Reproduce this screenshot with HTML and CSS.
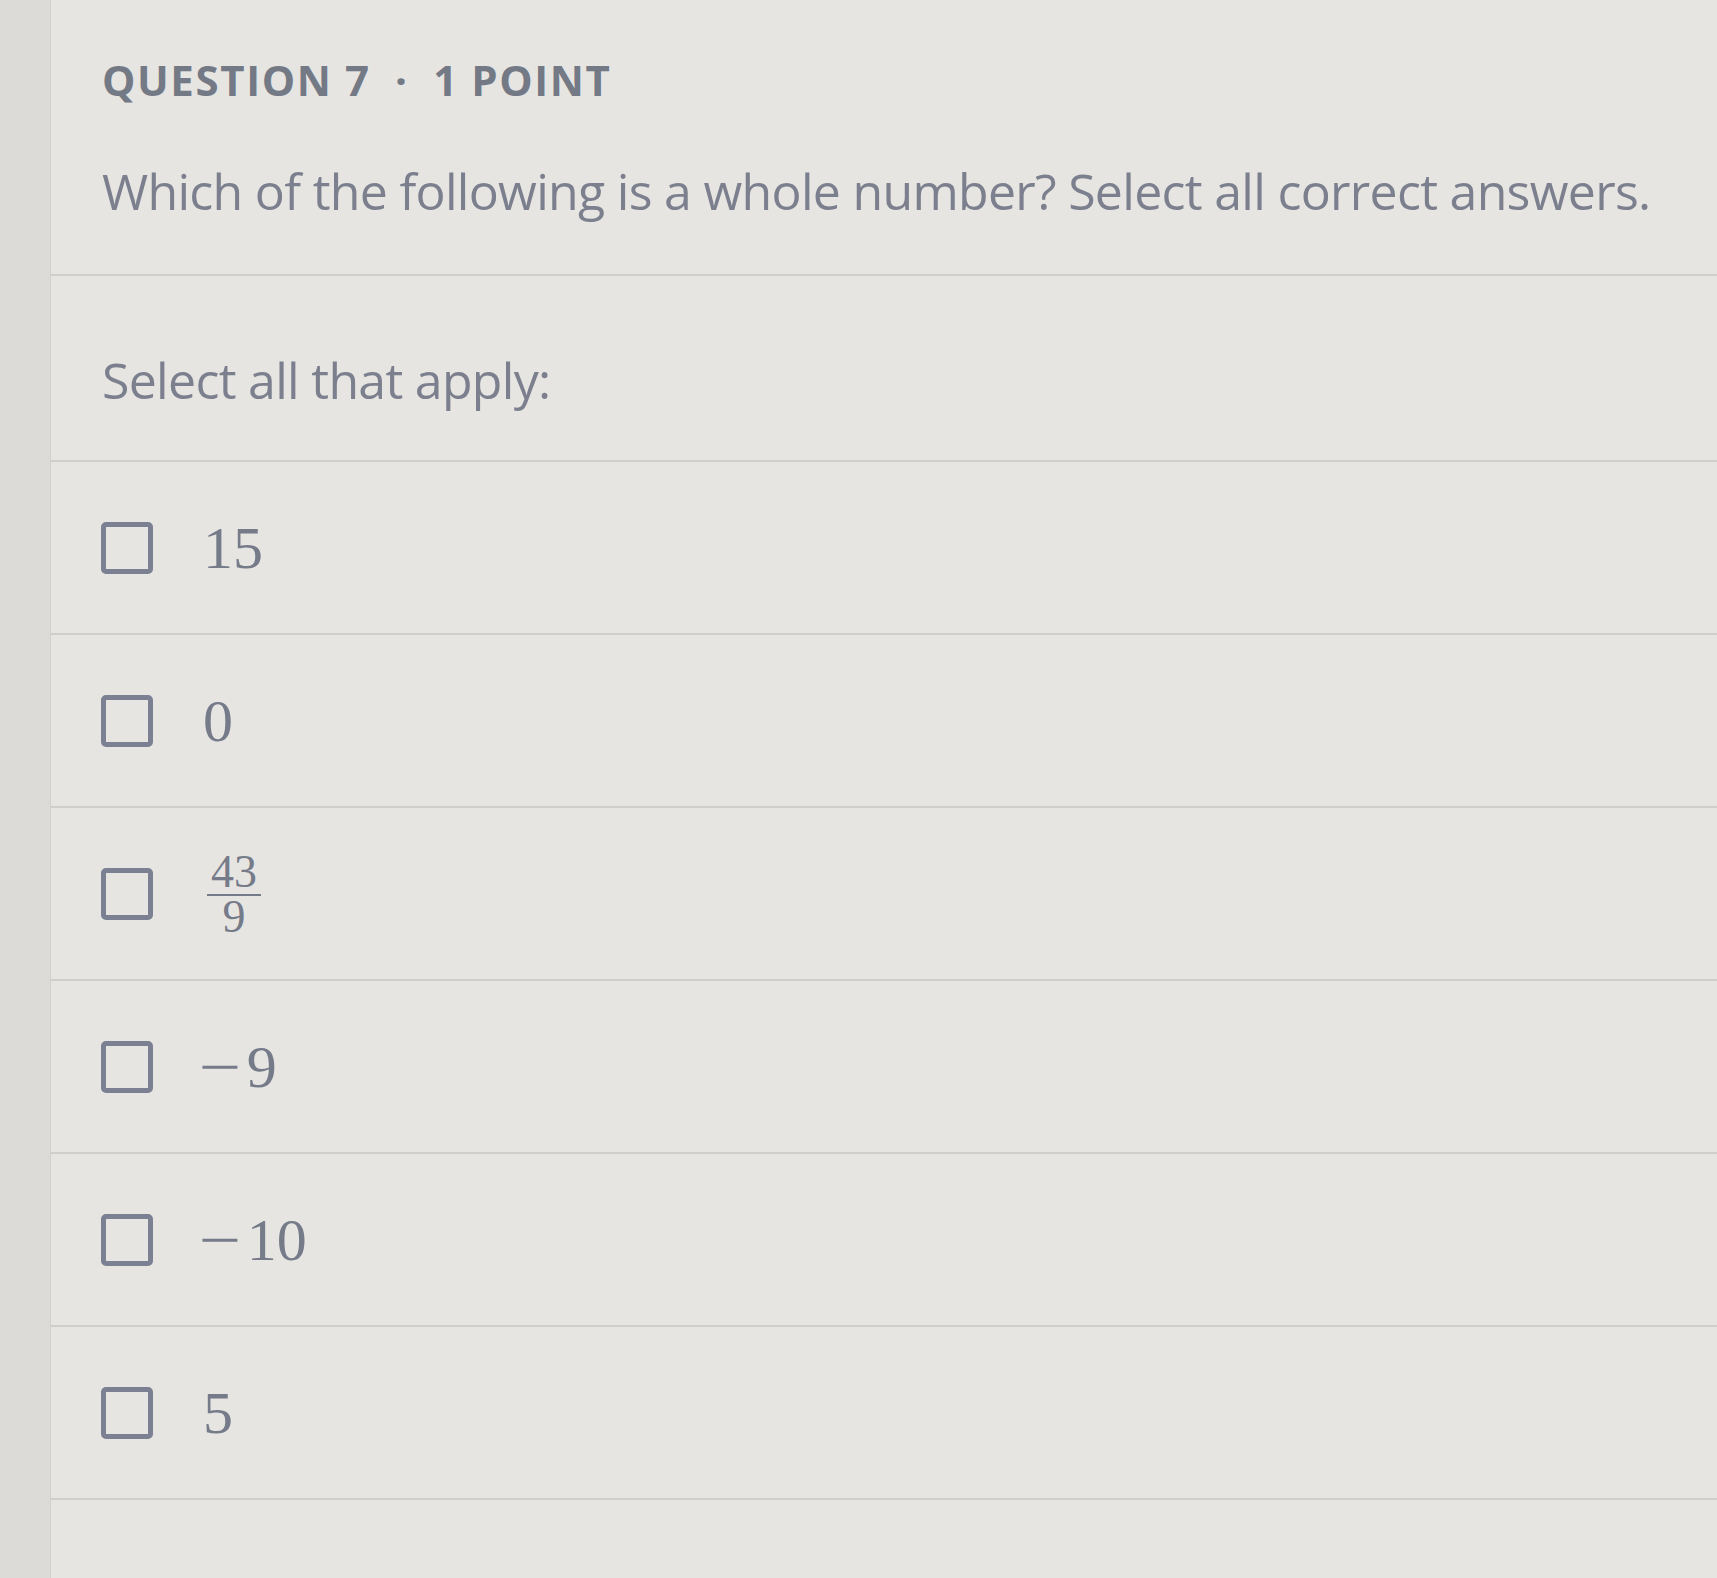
FILE: index.html
```html
<!DOCTYPE html>
<html lang="en">
<head>
<meta charset="utf-8">
<title>Question 7</title>
<link rel="stylesheet" href="styles.css">
</head>
<body>
<div class="page">
  <aside class="rail"></aside>
  <main class="card">
    <header class="q-head">
      <div class="q-meta">Question 7 <span class="dot">·</span> 1 point</div>
      <div class="q-text">Which of the following is a whole number? Select all correct answers.</div>
    </header>
    <div class="instr">Select all that apply:</div>
    <ul class="options">
      <li class="option"><span class="box"></span><span class="math">15</span></li>
      <li class="option"><span class="box"></span><span class="math">0</span></li>
      <li class="option"><span class="box"></span><span class="math frac"><span class="num">43</span><span class="den">9</span></span></li>
      <li class="option"><span class="box"></span><span class="math"><span class="minus">−</span>9</span></li>
      <li class="option"><span class="box"></span><span class="math"><span class="minus">−</span>10</span></li>
      <li class="option"><span class="box"></span><span class="math">5</span></li>
    </ul>
  </main>
</div>
</body>
</html>
```

FILE: styles.css
```css
html, body {
  margin: 0;
  padding: 0;
  height: 100%;
}
body {
  background: #e5e4e0;
  font-family: "Open Sans", "Noto Sans", sans-serif;
  color: #7e8290;
  overflow: hidden;
}
.page {
  display: flex;
  min-height: 1578px;
}
.rail {
  width: 50px;
  flex: 0 0 50px;
  background: #dcdbd7;
  border-right: 1px solid #d1d0cc;
}
.card {
  flex: 1;
  background: #e6e5e1;
}
.q-head {
  padding: 55px 0 52px 51px;
  border-bottom: 2px solid #cfcecb;
}
.q-meta {
  font-size: 42px;
  line-height: 50px;
  font-weight: 700;
  text-transform: uppercase;
  letter-spacing: 1.6px;
  color: #747986;
  white-space: nowrap;
}
.q-meta .dot {
  margin: 0 12px;
}
.q-text {
  margin-top: 55px;
  font-size: 50px;
  line-height: 62px;
  letter-spacing: -0.7px;
  color: #7c808e;
  white-space: nowrap;
}
.instr {
  padding: 73px 0 49px 51px;
  font-size: 50px;
  line-height: 62px;
  letter-spacing: -0.7px;
  color: #7c808e;
  border-bottom: 2px solid #cfcecb;
}
.options {
  list-style: none;
  margin: 0;
  padding: 0;
}
.option {
  height: 171px;
  display: flex;
  align-items: center;
  padding-left: 50px;
  border-bottom: 2px solid #cfcecb;
}
.box {
  width: 42px;
  height: 42px;
  border: 5px solid #7b8192;
  border-radius: 5px;
  flex: 0 0 auto;
}
.math {
  margin-left: 50px;
  font-family: "Liberation Serif", "DejaVu Serif", serif;
  font-size: 60px;
  line-height: 1;
  color: #767b8a;
}
.minus {
  display: inline-block;
  transform: scaleX(1.25);
  margin-right: 10px;
}
.frac {
  display: inline-flex;
  flex-direction: column;
  align-items: center;
  font-size: 46px;
  margin-left: 54px;
}
.frac .num {
  padding: 0 4px 4px;
  border-bottom: 2px solid #767b8a;
  line-height: 36px;
}
.frac .den {
  padding-top: 4px;
  line-height: 34px;
}
```
